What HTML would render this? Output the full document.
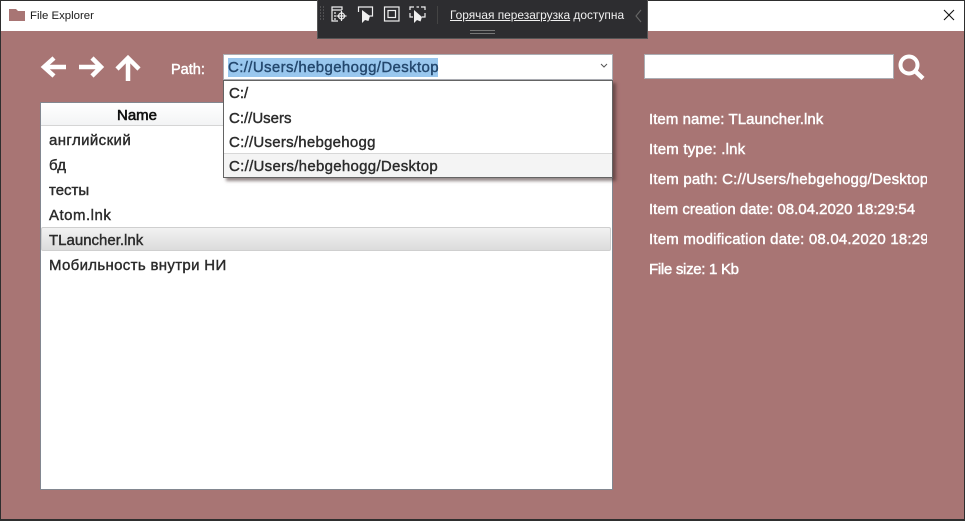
<!DOCTYPE html>
<html><head><meta charset="utf-8"><style>
html,body{margin:0;padding:0;width:965px;height:521px;overflow:hidden;background:#a87574}
*{box-sizing:border-box}
body{position:relative;font-family:"Liberation Sans","DejaVu Sans",sans-serif}
.a{position:absolute}
.t{position:absolute;white-space:nowrap;font-size:15px;line-height:20px;color:#2b2b2b;-webkit-text-stroke:.4px currentColor}
.w{color:#fff;font-size:15px;-webkit-text-stroke:.45px #fff}
</style></head><body>
<div class="a" style="left:0;top:0;width:965px;height:521px;border:1px solid #2e2e2e;border-bottom:2px solid #2e2e2e"></div>
<div class="a" style="left:1px;top:1px;width:963px;height:30px;background:#fff"></div>
<svg class="a" style="left:9px;top:9px" width="17" height="13"><path d="M0 0H7L9 2H16V12H0Z" fill="#a87574"/></svg>
<div class="t" style="left:30px;top:6px;font-size:11.4px;color:#1a1a1a;-webkit-text-stroke:0">File Explorer</div>
<svg class="a" style="left:943px;top:9px" width="12" height="12"><path d="M1 1L11 11M11 1L1 11" stroke="#111" stroke-width="1.1"/></svg>

<div class="a" style="left:317px;top:0;width:331px;height:39px;background:#2d2d30;border:1px solid #555;border-top:0"></div>
<svg class="a" style="left:320px;top:0" width="120" height="36" fill="none" stroke="#f0f0f0" stroke-width="1.2">
<path d="M0 7h1M0 10h1M0 13h1M0 16h1M0 19h1M3 7h1M3 10h1M3 13h1M3 16h1M3 19h1" stroke="#666"/>
<path d="M22 10V7H12V21H18M12 10h10M14 13h2M14 16h2M14 19h2"/>
<circle cx="21.500" cy="16" r="3"/><path d="M21.500 11V21M16.500 16H26.500"/>
<path d="M38.500 12V7H52.500V16H47"/>
<path d="M42 10L42 23L45 20L48.500 21L50 16Z" fill="#f0f0f0" stroke="none"/>
<rect x="64.500" y="7" width="14.500" height="14"/><rect x="68" y="10.500" width="7.500" height="7"/>
<path d="M90 10V7H94M101 7H105V10M90 13V17H93M105 13V17H102M96.500 7H99"/>
<path d="M94 10L94 23L97 20L100.500 21.500L102 17Z" fill="#f0f0f0" stroke="none"/>
</svg>
<div class="a" style="left:437px;top:6px;width:1px;height:18px;background:#444"></div>
<div class="t" style="left:450px;top:5px;font-size:11.9px;color:#f1f1f1;-webkit-text-stroke:0"><span style="text-decoration:underline">Горячая перезагрузка</span> доступна</div>
<svg class="a" style="left:634px;top:9px" width="10" height="14"><path d="M7 1L2 7L7 13" stroke="#666" stroke-width="1.100" fill="none"/></svg>
<div class="a" style="left:470px;top:30px;width:25px;height:4px;border-top:1px solid #777;border-bottom:1px solid #777"></div>

<svg class="a" style="left:40px;top:52px" width="102" height="30" fill="none" stroke="#fff" stroke-width="4.500">
<path d="M26 15H5M14 6L4 15L14 24"/>
<path d="M39 15H60M52 6L61 15L52 24"/>
<path d="M88 29V7M77 17L88 6L99 17"/>
</svg>
<div class="t w" style="left:171px;top:60px;font-size:14.500px">Path:</div>

<div class="a" style="left:223px;top:54px;width:390px;height:26px;background:#fff;border:1px solid #abadb3"></div>
<div class="a" style="left:228px;top:58px;width:210px;height:19px;background:#99c7ee"></div>
<div class="t" id="p" style="left:228px;top:58px;color:#24486e;letter-spacing:.37px">C://Users/hebgehogg/Desktop</div>
<svg class="a" style="left:600px;top:63px" width="8" height="6"><path d="M1 1L4 4L7 1" stroke="#555" fill="none"/></svg>

<div class="a" style="left:644px;top:54px;width:250px;height:25px;background:#fff;border:1px solid #abadb3"></div>
<svg class="a" style="left:897px;top:53px" width="30" height="30" fill="none" stroke="#fff"><circle cx="12" cy="12" r="8.500" stroke-width="4"/><path d="M18 18L26 25.500" stroke-width="4.500"/></svg>

<div class="a" style="left:40px;top:102px;width:573px;height:388px;background:#fff;border:1px solid #828790"></div>
<div class="a" style="left:41px;top:103px;width:571px;height:23px;background:linear-gradient(#fff,#f3f4f5);border-bottom:1px solid #d5d5d5"></div>
<div class="t" style="left:117px;top:106px;color:#111;font-size:15px;-webkit-text-stroke:.6px #111">Name</div>
<div class="t" style="left:49px;top:131px;letter-spacing:.4px">английский</div>
<div class="t" style="left:49px;top:156px;letter-spacing:.3px">бд</div>
<div class="t" style="left:49px;top:181px">тесты</div>
<div class="t" style="left:49px;top:206px;letter-spacing:.5px">Atom.lnk</div>
<div class="a" style="left:41px;top:227px;width:570px;height:24px;background:linear-gradient(#f2f2f2,#dcdcdc);border:1px solid #cfcfcf;border-radius:2px"></div>
<div class="t" style="left:49px;top:231px">TLauncher.lnk</div>
<div class="t" style="left:49px;top:256px;letter-spacing:.33px">Мобильность внутри НИ</div>

<div class="a" style="left:223px;top:80px;width:390px;height:98px;background:#fff;border:1px solid #646464;box-shadow:3px 3px 3px rgba(60,40,40,.55)"></div>
<div class="a" style="left:224px;top:153px;width:388px;height:24px;background:#f4f4f4;border-top:1px solid #d8d8d8"></div>
<div class="t" style="left:229px;top:84px">C:/</div>
<div class="t" style="left:229px;top:109px">C://Users</div>
<div class="t" style="left:229px;top:133px;letter-spacing:.26px">C://Users/hebgehogg</div>
<div class="t" style="left:229px;top:157px;letter-spacing:.3px">C://Users/hebgehogg/Desktop</div>

<div class="a" style="left:649px;top:100px;width:278px;height:190px;overflow:hidden">
<div class="t w" style="left:0;top:10px;letter-spacing:.05px">Item name: TLauncher.lnk</div>
<div class="t w" style="left:0;top:40px;letter-spacing:.2px">Item type: .lnk</div>
<div class="t w" style="left:0;top:70px;letter-spacing:.2px">Item path: C://Users/hebgehogg/Desktop</div>
<div class="t w" style="left:0;top:100px">Item creation date: 08.04.2020 18:29:54</div>
<div class="t w" style="left:0;top:130px;letter-spacing:.2px">Item modification date: 08.04.2020 18:29:54</div>
<div class="t w" style="left:0;top:160px;letter-spacing:-.3px">File size: 1 Kb</div>
</div>
</body></html>
